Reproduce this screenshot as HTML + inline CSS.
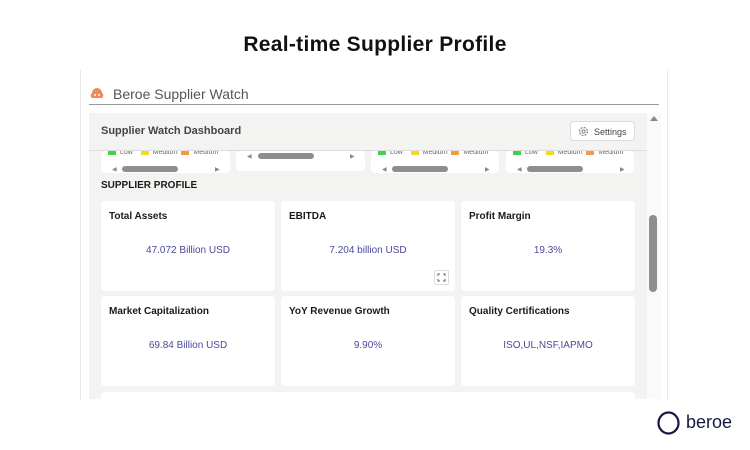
<!DOCTYPE html>
<html><head><style>
*{margin:0;padding:0;box-sizing:border-box}
body{width:750px;height:450px;background:#fff;position:relative;overflow:hidden;font-family:"Liberation Sans",sans-serif}
.a{position:absolute}
.title{left:0;width:750px;top:33px;text-align:center;font-size:21px;font-weight:bold;color:#111;letter-spacing:.3px}
.vl{width:1px;background:#e8e8e8}
.panel{left:89px;top:113px;width:558px;height:286px;background:#f3f3f1}
.card{background:#fff;border-radius:4px}
.ct{font-size:10px;font-weight:bold;color:#1a1a1a}
.cv{font-size:10px;color:#4a4a9a;text-align:center;width:100%}
.thumb{height:6px;background:#8e8e8e;border-radius:3px}
.leg{font-size:7px;color:#666;height:4px;overflow:hidden;line-height:3px}
.sq{display:inline-block;width:8px;height:4px;margin-right:4px;vertical-align:top}
</style></head><body>
<div class="a title">Real-time Supplier Profile</div>
<div class="a vl" style="left:80px;top:70px;height:330px"></div>
<div class="a vl" style="left:667px;top:70px;height:330px"></div>
<svg class="a" style="left:89px;top:88px" width="16" height="12" viewBox="0 0 16 12"><path d="M3 10 A3 3 0 0 1 3 5 A5 5 0 0 1 13 5 A3 3 0 0 1 13 10 Z" fill="#f08a5d"/><circle cx="6" cy="7" r="1" fill="#fff"/><circle cx="10" cy="7" r="1" fill="#fff"/></svg>
<div class="a" style="left:113px;top:86px;font-size:14px;color:#555">Beroe Supplier Watch</div>
<div class="a" style="left:89px;top:104px;width:570px;height:1px;background:#999"></div>
<div class="a panel"></div>
<div class="a" style="left:647px;top:113px;width:14px;height:286px;background:#fafafa"></div>
<div class="a" style="left:650px;top:116px;width:0;height:0;border-left:4px solid transparent;border-right:4px solid transparent;border-bottom:5px solid #888"></div>
<div class="a" style="left:649px;top:215px;width:8px;height:77px;background:#8e8e8e;border-radius:4px"></div>
<div class="a" style="left:101px;top:125px;font-size:11px;font-weight:bold;color:#444">Supplier Watch Dashboard</div>
<div class="a" style="left:570px;top:121px;width:65px;height:20px;background:#fff;border:1px solid #ddd;border-radius:4px;font-size:9px;color:#444;padding:5px 0 0 23px">Settings</div>
<svg class="a" style="left:578px;top:126px" width="11" height="11" viewBox="0 0 12 12"><circle cx="6" cy="6" r="4.3" fill="none" stroke="#777" stroke-width="1.3" stroke-dasharray="2 1.4"/><circle cx="6" cy="6" r="1.7" fill="none" stroke="#777"/></svg>
<div class="a" style="left:89px;top:150px;width:558px;height:1px;background:#ddd"></div>
<div class="a card" style="left:101px;top:151px;width:129px;height:22px">
<div class="leg" style="margin:0 0 0 7px"><span class="sq" style="background:#3ed44a"></span>Low&nbsp;&nbsp;&nbsp;&nbsp;<span class="sq" style="background:#f5d820"></span>Medium&nbsp;&nbsp;<span class="sq" style="background:#f59a40"></span>Medium</div>
<div class="a thumb" style="left:21px;top:15px;width:56px"></div>
<div class="a" style="left:11px;top:15px;font-size:6px;color:#888">◀</div><div class="a" style="left:114px;top:15px;font-size:6px;color:#888">▶</div></div>
<div class="a card" style="left:236px;top:151px;width:129px;height:20px">
<div class="a thumb" style="left:22px;top:2px;width:56px"></div>
<div class="a" style="left:11px;top:2px;font-size:6px;color:#888">◀</div><div class="a" style="left:114px;top:2px;font-size:6px;color:#888">▶</div></div>
<div class="a card" style="left:371px;top:151px;width:128px;height:22px">
<div class="leg" style="margin:0 0 0 7px"><span class="sq" style="background:#3ed44a"></span>Low&nbsp;&nbsp;&nbsp;&nbsp;<span class="sq" style="background:#f5d820"></span>Medium&nbsp;&nbsp;<span class="sq" style="background:#f59a40"></span>Medium</div>
<div class="a thumb" style="left:21px;top:15px;width:56px"></div>
<div class="a" style="left:11px;top:15px;font-size:6px;color:#888">◀</div><div class="a" style="left:114px;top:15px;font-size:6px;color:#888">▶</div></div>
<div class="a card" style="left:506px;top:151px;width:128px;height:22px">
<div class="leg" style="margin:0 0 0 7px"><span class="sq" style="background:#3ed44a"></span>Low&nbsp;&nbsp;&nbsp;&nbsp;<span class="sq" style="background:#f5d820"></span>Medium&nbsp;&nbsp;<span class="sq" style="background:#f59a40"></span>Medium</div>
<div class="a thumb" style="left:21px;top:15px;width:56px"></div>
<div class="a" style="left:11px;top:15px;font-size:6px;color:#888">◀</div><div class="a" style="left:114px;top:15px;font-size:6px;color:#888">▶</div></div>
<div class="a" style="left:101px;top:180px;font-size:10px;font-weight:bold;color:#1a1a1a">SUPPLIER PROFILE</div>
<div class="a card" style="left:101px;top:201px;width:174px;height:90px"><div class="a ct" style="left:8px;top:10px">Total Assets</div><div class="a cv" style="top:44px">47.072 Billion USD</div></div>
<div class="a card" style="left:281px;top:201px;width:174px;height:90px"><div class="a ct" style="left:8px;top:10px">EBITDA</div><div class="a cv" style="top:44px">7.204 billion USD</div>
<div class="a" style="left:153px;top:69px;width:15px;height:15px;border:1px solid #ddd;border-radius:2px"><svg width="13" height="13" viewBox="0 0 13 13" style="display:block"><path d="M3 5V3h2M8 3h2v2M10 8v2H8M5 10H3V8" fill="none" stroke="#666" stroke-width="1"/></svg></div></div>
<div class="a card" style="left:461px;top:201px;width:174px;height:90px"><div class="a ct" style="left:8px;top:10px">Profit Margin</div><div class="a cv" style="top:44px">19.3%</div></div>
<div class="a card" style="left:101px;top:296px;width:174px;height:90px"><div class="a ct" style="left:8px;top:10px">Market Capitalization</div><div class="a cv" style="top:44px">69.84 Billion USD</div></div>
<div class="a card" style="left:281px;top:296px;width:174px;height:90px"><div class="a ct" style="left:8px;top:10px">YoY Revenue Growth</div><div class="a cv" style="top:44px">9.90%</div></div>
<div class="a card" style="left:461px;top:296px;width:174px;height:90px"><div class="a ct" style="left:8px;top:10px">Quality Certifications</div><div class="a cv" style="top:44px">ISO,UL,NSF,IAPMO</div></div>
<div class="a card" style="left:101px;top:392px;width:534px;height:7px;border-radius:4px 4px 0 0"></div>
<svg class="a" style="left:656px;top:410px" width="26" height="26" viewBox="0 0 26 26"><ellipse cx="12.5" cy="13" rx="10" ry="10.5" fill="none" stroke="#14193f" stroke-width="2.2"/></svg>
<div class="a" style="left:686px;top:412px;font-size:18px;color:#14193f">beroe</div>
</body></html>
